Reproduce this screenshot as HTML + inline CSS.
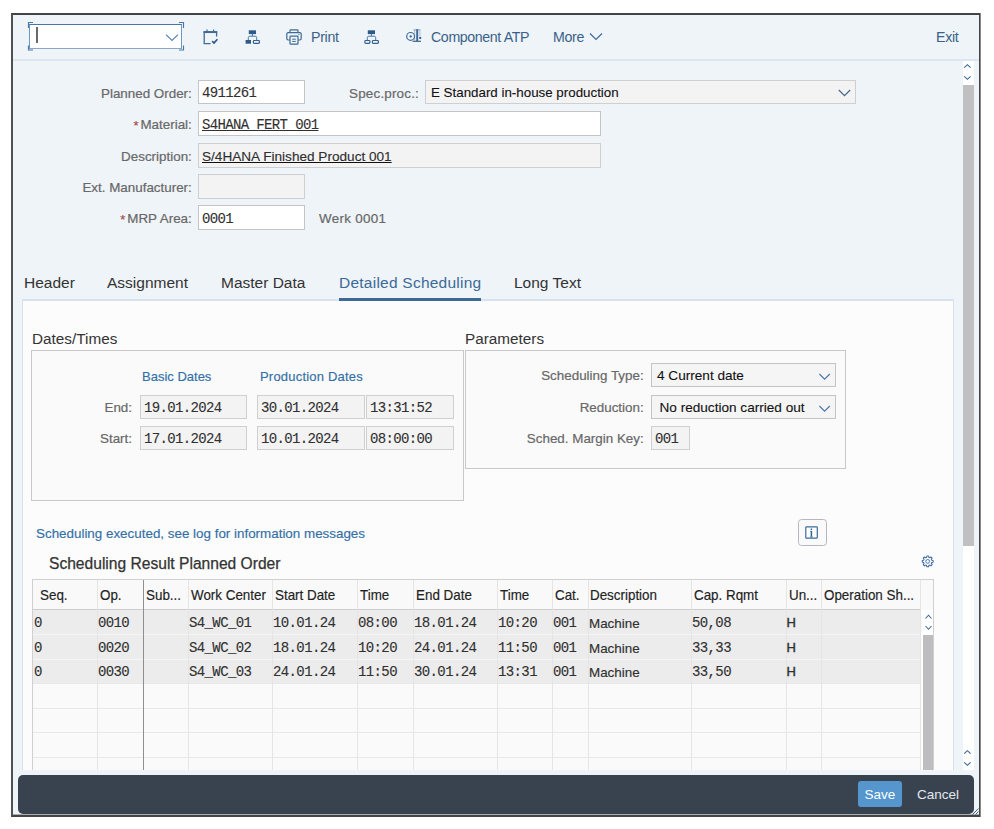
<!DOCTYPE html>
<html>
<head>
<meta charset="utf-8">
<title>Planned Order</title>
<style>
*{box-sizing:border-box;margin:0;padding:0}
html,body{width:994px;height:829px;overflow:hidden;background:#fff}
body{font-family:"Liberation Sans",sans-serif;font-size:14px;color:#333;position:relative}
.abs{position:absolute}
#win{position:absolute;left:11px;top:13px;width:969px;height:804px;background:#eff4f9;border:2px solid #444;border-left-color:#4f5153;border-right-width:1px;border-bottom-width:2px;overflow:hidden}
/* coordinates inside #page are page coordinates */
#page{position:absolute;left:0;top:0;width:994px;height:829px}
.tbsep{left:13px;top:59px;width:966px;height:2px;background:#dbe6f1}
.lbl{position:absolute;color:#686868;-webkit-text-stroke:0.2px #686868;font-size:13.4px;letter-spacing:0;text-align:right;white-space:nowrap;line-height:27px;height:25px}
.lbl .req{color:#cc3d3d;margin-right:2px;font-size:13px;position:relative;top:1px}
.inp{position:absolute;height:25px;border:1px solid #c4c4c4;background:#fff;font-family:"Liberation Mono",monospace;font-size:14px;letter-spacing:-0.64px;line-height:26px;padding-left:3px;color:#303030;-webkit-text-stroke:0.1px #303030;white-space:nowrap;overflow:hidden}
.inp.h24{height:24px;line-height:24px;padding-left:3px}
.inp.sel{background:#f5f5f5;line-height:22px;padding-left:5px}
.inp.ro{background:#f3f3f4;border-color:#cfcfcf}
.inp.sans{font-family:"Liberation Sans",sans-serif;font-size:13.6px;line-height:25px;letter-spacing:0;-webkit-text-stroke:0.1px #111}
.inp.sans.sel{line-height:23px}
.u{text-decoration:underline;text-underline-offset:0.8px;text-decoration-thickness:1.3px;text-decoration-skip-ink:none}
.tbtxt{position:absolute;color:#3a6288;font-size:14.2px;letter-spacing:-0.3px;white-space:nowrap;line-height:16px}
.tab{position:absolute;top:272.5px;font-size:15.5px;color:#333;white-space:nowrap;line-height:20px}
.tab.sel{color:#3c6a97;letter-spacing:0.24px}
.grp{position:absolute;border:1px solid #c8c8c8;background:#fafafa}
.gt{position:absolute;font-size:15.3px;color:#333;white-space:nowrap;line-height:20px}
.blue{color:#336fa6;-webkit-text-stroke:0.15px #336fa6}
svg{position:absolute;overflow:visible}
.hl{left:33px;width:888px;height:1px;background:#e8e8e8}
.hl.lt{background:#f5f5f5}
.vl{top:580px;width:1px;height:190px;background:#e5e5e5}
.vl.dk{background:#8f8f8f}
.th{position:absolute;top:587.6px;transform:scaleY(1.1);transform-origin:0 12.6px;font-size:13.4px;color:#222;-webkit-text-stroke:0.15px #222;line-height:16px;white-space:nowrap}
.td{position:absolute;font-family:"Liberation Mono",monospace;font-size:14px;letter-spacing:-0.62px;color:#303030;-webkit-text-stroke:0.12px #303030;line-height:25px;white-space:nowrap}
.td.sans{font-family:"Liberation Sans",sans-serif;font-size:13.4px;letter-spacing:0;-webkit-text-stroke:0.15px #303030}

</style>
</head>
<body>
<div id="win"></div>
<div class="abs" style="left:980px;top:13px;width:1px;height:804px;background:#8a8a8a"></div>
<div id="page">
<!-- TOOLBAR -->
<div class="abs tbsep"></div>
<!-- command field -->
<div class="abs" style="left:29px;top:24px;width:153px;height:25px;border:1px solid #6f98c2;border-top-color:#4676a8;border-bottom-color:#8aa8c8;background:#fff"></div>
<div class="abs" style="left:36px;top:27px;width:2px;height:15.6px;background:#6a6a6a"></div>
<svg style="left:27px;top:21px" width="159" height="31" viewBox="0 0 159 31" fill="none" stroke="#4a78a8" stroke-width="1.15">
<path d="M6 1.5H1.5V7"/><path d="M1.5 24.6V29H6"/><path d="M152 1.5H156.5V7"/><path d="M156.5 24.6V29H152"/>
<path d="M139 13.6L145 19.4L151 13.6" stroke="#5583b3" stroke-width="1.2"/>
</svg>

<!-- icon 1: calendar check -->
<svg style="left:203px;top:29px" width="16" height="16" viewBox="0 0 16 16" fill="none" stroke="#3f6a96" stroke-width="1.3">
<path d="M13.6 7.6V2.8H1.2V14.6H7.6"/><path d="M0.6 3.1H14.2" stroke-width="1.9"/><path d="M4 0.6V2.6M10.6 0.6V2.6" stroke-width="1.2"/><path d="M9.2 12.2L11 14.1L14.4 10.2" stroke="#2a5a8c" stroke-width="1.7"/>
</svg>
<!-- icon 2: hierarchy (left filled) -->
<svg style="left:245px;top:30px" width="15" height="14" viewBox="0 0 15 14" fill="none" stroke="#34628f" stroke-width="1.2">
<rect x="3.8" y="0.3" width="7.2" height="3.8" fill="#2c5b8a" stroke="none"/>
<path d="M7.4 4V6.2" stroke-width="1" stroke="#4a78a8"/><path d="M3.3 10V7.6Q3.3 6.2 4.8 6.2H10.2Q11.7 6.2 11.7 7.6V10" stroke-width="1" stroke="#4a78a8"/>
<rect x="0.6" y="10" width="5.4" height="3.7" fill="#2c5b8a" stroke="none"/>
<rect x="8.4" y="10.5" width="6" height="2.8" rx="0.8"/>
</svg>
<!-- icon 3: printer -->
<svg style="left:286px;top:29px" width="16" height="16" viewBox="0 0 16 16" fill="none" stroke="#3f6a96" stroke-width="1.2">
<path d="M4 3.6V1.6Q4 0.8 4.8 0.8H11.2Q12 0.8 12 1.6V3.6"/>
<path d="M4 11H2.2Q0.8 11 0.8 9.6V5Q0.8 3.6 2.2 3.6H13.8Q15.2 3.6 15.2 5V9.6Q15.2 11 13.8 11H12"/>
<rect x="4" y="7.2" width="8" height="8" rx="0.8"/>
<path d="M6.2 10.2H9.8M6.2 12.4H9.8" stroke-width="1"/><path d="M12.4 5.6H13.4" stroke-width="1"/>
</svg>
<div class="tbtxt" style="left:311px;top:29px">Print</div>
<!-- icon 4: hierarchy (outlined) -->
<svg style="left:364px;top:30px" width="15" height="14" viewBox="0 0 15 14" fill="none" stroke="#34628f" stroke-width="1.2">
<rect x="3.8" y="0.3" width="7.2" height="3.8" fill="#2c5b8a" stroke="none"/>
<path d="M7.4 4V6.2" stroke-width="1" stroke="#4a78a8"/><path d="M3.3 10V7.6Q3.3 6.2 4.8 6.2H10.2Q11.7 6.2 11.7 7.6V10" stroke-width="1" stroke="#4a78a8"/>
<rect x="0.9" y="10.5" width="5" height="2.8" rx="0.8"/>
<rect x="8.4" y="10.5" width="6" height="2.8" rx="0.8"/>
</svg>
<!-- icon 5: component atp -->
<svg style="left:400px;top:24px" width="30" height="24" viewBox="0 0 30 24" fill="none" stroke="#3f6a96" stroke-width="1.2">
<circle cx="10.6" cy="12.4" r="3.9"/><circle cx="10.7" cy="12.4" r="1.15" fill="#2f5d8c" stroke="none"/>
<path d="M17.2 5.2V17.2" stroke-width="1.9" stroke="#3a6593"/>
<path d="M13.4 5.8H20.6" stroke-width="1.3" opacity="0.45"/>
<path d="M14.6 6V16.6M19.9 6.6V12" stroke-width="1.2" opacity="0.35"/>
<path d="M12.6 17.3H21" stroke-width="1.2" stroke="#34628f"/>
<circle cx="20.2" cy="13.9" r="1.15" fill="#2f5d8c" stroke="none"/>
</svg>
<div class="tbtxt" style="left:431px;top:29px;letter-spacing:-0.38px">Component ATP</div>
<div class="tbtxt" style="left:553px;top:29px">More</div>
<svg style="left:589px;top:32px" width="14" height="9" viewBox="0 0 14 9" fill="none" stroke="#3f6a96" stroke-width="1.2"><path d="M1 1.5L7 7.5L13 1.5"/></svg>
<div class="tbtxt" style="left:936px;top:29px">Exit</div>

<!-- HEADER FORM -->
<div class="lbl" style="left:40px;top:80px;width:151.8px">Planned Order:</div>
<div class="inp h24" style="left:198px;top:80px;width:107px">4911261</div>
<div class="lbl" style="left:300px;top:80px;width:119px;letter-spacing:0.2px">Spec.proc.:</div>
<div class="inp sans sel ro h24" style="left:425px;top:80px;width:431px;color:#111;font-size:13.35px">E Standard in-house production</div>
<svg style="left:838px;top:88.5px" width="13" height="8" viewBox="0 0 13 8" fill="none" stroke="#46688c" stroke-width="1.2"><path d="M0.8 1L6.5 6.7L12.2 1"/></svg>

<div class="lbl" style="left:40px;top:111px;width:151.8px"><span class="req">*</span>Material:</div>
<div class="inp" style="left:198px;top:111px;width:403px"><span class="u">S4HANA_FERT_001</span></div>

<div class="lbl" style="left:40px;top:143px;width:151.8px">Description:</div>
<div class="inp sans ro" style="left:198px;top:143px;width:403px"><span class="u">S/4HANA Finished Product 001</span></div>

<div class="lbl" style="left:40px;top:174px;width:151.8px">Ext. Manufacturer:</div>
<div class="inp ro" style="left:198px;top:174px;width:107px"></div>

<div class="lbl" style="left:40px;top:205px;width:151.8px"><span class="req">*</span>MRP Area:</div>
<div class="inp" style="left:198px;top:205px;width:107px">0001</div>
<div class="lbl" style="left:319px;top:205px;text-align:left;letter-spacing:0.3px">Werk 0001</div>

<!-- TABS -->
<div class="tab" style="left:24px">Header</div>
<div class="tab" style="left:107px">Assignment</div>
<div class="tab" style="left:221px">Master Data</div>
<div class="tab sel" style="left:339px">Detailed Scheduling</div>
<div class="tab" style="left:514px">Long Text</div>
<div class="abs" style="left:339px;top:298px;width:142px;height:3px;background:#3c6a97;z-index:3"></div>
<!-- TAB PANEL -->
<div class="abs" style="left:22px;top:299px;width:932px;height:471px;background:#fcfcfc;border:1px solid #d3e1ef;border-top:2px solid #d6e3f0;border-bottom:none"></div>

<!-- Dates/Times group -->
<div class="gt" style="left:32px;top:329px">Dates/Times</div>
<div class="grp" style="left:31px;top:350px;width:433px;height:151px"></div>
<div class="lbl blue" style="left:142px;top:363.3px;text-align:left;font-size:13px;letter-spacing:0">Basic Dates</div>
<div class="lbl blue" style="left:260px;top:363.3px;text-align:left;font-size:13px;letter-spacing:0.2px">Production Dates</div>
<div class="lbl" style="left:60px;top:395px;width:72px;line-height:26px">End:</div>
<div class="inp ro h24" style="left:140px;top:395px;width:107px">19.01.2024</div>
<div class="inp ro h24" style="left:257px;top:395px;width:108px">30.01.2024</div>
<div class="inp ro h24" style="left:366px;top:395px;width:88px">13:31:52</div>
<div class="lbl" style="left:60px;top:426px;width:72px;line-height:26px">Start:</div>
<div class="inp ro h24" style="left:140px;top:426px;width:107px">17.01.2024</div>
<div class="inp ro h24" style="left:257px;top:426px;width:108px">10.01.2024</div>
<div class="inp ro h24" style="left:366px;top:426px;width:88px">08:00:00</div>

<!-- Parameters group -->
<div class="gt" style="left:465px;top:329px">Parameters</div>
<div class="grp" style="left:465px;top:350px;width:381px;height:119px"></div>
<div class="lbl" style="left:480px;top:363px;width:163.7px;line-height:26px">Scheduling Type:</div>
<div class="inp sans h24 sel" style="left:651px;top:363px;width:185px;color:#111">4 Current date</div>
<svg style="left:818px;top:372.5px" width="13" height="8" viewBox="0 0 13 8" fill="none" stroke="#4a76a8" stroke-width="1.1"><path d="M1.4 1L6.6 6.2L11.8 1"/></svg>
<div class="lbl" style="left:480px;top:395px;width:163.7px;line-height:26px">Reduction:</div>
<div class="inp sans h24 sel" style="left:651px;top:395px;width:185px;color:#111;padding-left:7.5px">No reduction carried out</div>
<svg style="left:818px;top:404.5px" width="13" height="8" viewBox="0 0 13 8" fill="none" stroke="#4a76a8" stroke-width="1.1"><path d="M1.4 1L6.6 6.2L11.8 1"/></svg>
<div class="lbl" style="left:480px;top:426px;width:163.7px;line-height:26px">Sched. Margin Key:</div>
<div class="inp ro h24" style="left:651px;top:426px;width:39px">001</div>

<!-- message + info button -->
<div class="lbl blue" style="left:36px;top:520px;text-align:left;font-size:13.4px;letter-spacing:0">Scheduling executed, see log for information messages</div>
<div class="abs" style="left:798px;top:519px;width:29px;height:27px;border:1px solid #b4b8be;border-radius:3.5px;background:#fafafa"></div>
<svg style="left:805px;top:526px" width="13" height="13" viewBox="0 0 13 13" fill="none" stroke="#3a6a9c" stroke-width="1.2"><rect x="0.8" y="0.8" width="11.5" height="11.4" rx="0.8" fill="#fff"/><path d="M6.4 5V10.6M6.4 2.6V3.9" stroke-width="1.5" stroke="#2f6296"/><path d="M5 10.9H7.8M5.2 5.3H6.4" stroke-width="0.9"/></svg>

<!-- table title -->
<div class="gt" style="left:49px;top:554px;font-size:15.6px;-webkit-text-stroke:0.25px #333">Scheduling Result Planned Order</div>
<div class="abs" style="left:32px;top:579px;width:902px;height:191px;background:#fafafa;border:1px solid #d0d0d0;border-bottom:none"></div>
<div class="abs" style="left:33px;top:580px;width:900px;height:29px;background:#f9f9f9"></div>
<div class="abs" style="left:33px;top:610px;width:887px;height:73px;background:#ececec"></div>
<div class="abs" style="left:33px;top:609px;width:888px;height:1px;background:#cdcdcd"></div>
<div class="abs hl lt" style="top:634px"></div>
<div class="abs hl lt" style="top:659px"></div>
<div class="abs hl" style="top:683px"></div>
<div class="abs hl" style="top:708px"></div>
<div class="abs hl" style="top:732px"></div>
<div class="abs hl" style="top:757px"></div>
<div class="abs vl" style="left:97px"></div>
<div class="abs vl dk" style="left:143px"></div>
<div class="abs vl" style="left:188px"></div>
<div class="abs vl" style="left:272px"></div>
<div class="abs vl" style="left:357px"></div>
<div class="abs vl" style="left:413px"></div>
<div class="abs vl" style="left:497px"></div>
<div class="abs vl" style="left:552px"></div>
<div class="abs vl" style="left:588px"></div>
<div class="abs vl" style="left:691px"></div>
<div class="abs vl" style="left:786px"></div>
<div class="abs vl" style="left:821px"></div>
<div class="abs vl" style="left:920px"></div>
<div class="th" style="left:40px">Seq.</div>
<div class="th" style="left:100px">Op.</div>
<div class="th" style="left:146px">Sub...</div>
<div class="th" style="left:191px">Work Center</div>
<div class="th" style="left:275px">Start Date</div>
<div class="th" style="left:360px">Time</div>
<div class="th" style="left:416px">End Date</div>
<div class="th" style="left:500px">Time</div>
<div class="th" style="left:555px">Cat.</div>
<div class="th" style="left:590px">Description</div>
<div class="th" style="left:694px">Cap. Rqmt</div>
<div class="th" style="left:789px">Un...</div>
<div class="th" style="left:824px">Operation Sh...</div>
<div class="td" style="left:34px;top:611px">0</div>
<div class="td" style="left:98px;top:611px">0010</div>
<div class="td" style="left:189px;top:611px">S4_WC_01</div>
<div class="td" style="left:273px;top:611px">10.01.24</div>
<div class="td" style="left:358px;top:611px">08:00</div>
<div class="td" style="left:414px;top:611px">18.01.24</div>
<div class="td" style="left:498px;top:611px">10:20</div>
<div class="td" style="left:553px;top:611px">001</div>
<div class="td sans" style="left:589px;top:610.5px">Machine</div>
<div class="td" style="left:692px;top:611px">50,08</div>
<div class="td sans" style="left:786.5px;top:609.5px;font-size:13px;-webkit-text-stroke:0.4px #303030">H</div>
<div class="td" style="left:34px;top:636px">0</div>
<div class="td" style="left:98px;top:636px">0020</div>
<div class="td" style="left:189px;top:636px">S4_WC_02</div>
<div class="td" style="left:273px;top:636px">18.01.24</div>
<div class="td" style="left:358px;top:636px">10:20</div>
<div class="td" style="left:414px;top:636px">24.01.24</div>
<div class="td" style="left:498px;top:636px">11:50</div>
<div class="td" style="left:553px;top:636px">001</div>
<div class="td sans" style="left:589px;top:635.5px">Machine</div>
<div class="td" style="left:692px;top:636px">33,33</div>
<div class="td sans" style="left:786.5px;top:634.5px;font-size:13px;-webkit-text-stroke:0.4px #303030">H</div>
<div class="td" style="left:34px;top:660px">0</div>
<div class="td" style="left:98px;top:660px">0030</div>
<div class="td" style="left:189px;top:660px">S4_WC_03</div>
<div class="td" style="left:273px;top:660px">24.01.24</div>
<div class="td" style="left:358px;top:660px">11:50</div>
<div class="td" style="left:414px;top:660px">30.01.24</div>
<div class="td" style="left:498px;top:660px">13:31</div>
<div class="td" style="left:553px;top:660px">001</div>
<div class="td sans" style="left:589px;top:659.5px">Machine</div>
<div class="td" style="left:692px;top:660px">33,50</div>
<div class="td sans" style="left:786.5px;top:658.5px;font-size:13px;-webkit-text-stroke:0.4px #303030">H</div>
<div class="abs" style="left:922px;top:610px;width:11px;height:160px;background:#fff"></div>
<div class="abs" style="left:923px;top:635px;width:10px;height:135px;background:#bdbdbf"></div>
<svg style="left:925px;top:614px" width="7" height="17" viewBox="0 0 7 17" fill="none" stroke="#3f6a96" stroke-width="1.1"><path d="M0.5 4.5L3.5 1.2L6.5 4.5"/><path d="M0.5 12L3.5 15.3L6.5 12"/></svg>
<!-- gear -->
<svg style="left:921px;top:555px" width="14" height="13" viewBox="0 0 14 13" fill="none" stroke="#3d6ca3" stroke-width="1.05" stroke-linejoin="round"><path d="M5.84 0.97 L7.56 0.97 L7.76 2.28 L8.86 2.74 L9.93 1.95 L11.15 3.17 L10.36 4.24 L10.82 5.34 L12.13 5.54 L12.13 7.26 L10.82 7.46 L10.36 8.56 L11.15 9.63 L9.93 10.85 L8.86 10.06 L7.76 10.52 L7.56 11.83 L5.84 11.83 L5.64 10.52 L4.54 10.06 L3.47 10.85 L2.25 9.63 L3.04 8.56 L2.58 7.46 L1.27 7.26 L1.27 5.54 L2.58 5.34 L3.04 4.24 L2.25 3.17 L3.47 1.95 L4.54 2.74 L5.64 2.28Z"/><circle cx="6.7" cy="6.4" r="1.9" stroke-width="0.9"/></svg>
<!-- right scrollbar -->
<div class="abs" style="left:962.5px;top:61px;width:11.5px;height:709px;background:#fff"></div>
<div class="abs" style="left:962.5px;top:85px;width:11.5px;height:461px;background:#c0c0c2"></div>
<svg style="left:963px;top:63px" width="9" height="19" viewBox="0 0 9 19" fill="none" stroke="#3b6a98" stroke-width="1.15"><path d="M1.2 4.7L4.4 1.7L7.6 4.7"/><path d="M1.2 13.3L4.4 16.3L7.6 13.3"/></svg>
<svg style="left:963px;top:749px" width="9" height="19" viewBox="0 0 9 19" fill="none" stroke="#3b6a98" stroke-width="1.15"><path d="M1.2 4.7L4.4 1.7L7.6 4.7"/><path d="M1.2 13.3L4.4 16.3L7.6 13.3"/></svg>
<!-- gap under content -->
<div class="abs" style="left:13px;top:770px;width:966px;height:6px;background:#eff4f9"></div>
<!-- footer -->
<div class="abs" style="left:13px;top:814px;width:966px;height:1px;background:#a9acb0"></div>
<div class="abs" style="left:18px;top:775px;width:956px;height:38.5px;background:#38434f;border-radius:5px"></div>
<svg style="left:972px;top:808px" width="7" height="7" viewBox="0 0 7 7" fill="none" stroke="#3c5f86" stroke-width="1"><path d="M0.5 6.5L6.5 0.5M3.5 6.5L6.5 3.5"/></svg>
<div class="abs" style="left:858px;top:781px;width:44px;height:26px;background:#5496cd;border-radius:3px;color:#fff;font-size:13.5px;line-height:27px;text-align:center">Save</div>
<div class="abs" style="left:917px;top:781px;color:#e3e9f0;font-size:13.5px;line-height:27px">Cancel</div>



</div>
</body>
</html>
